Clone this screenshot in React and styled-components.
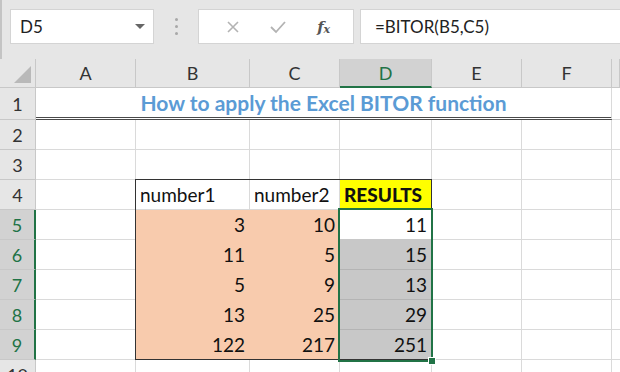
import { Fragment } from "react";
import styled, { createGlobalStyle } from "styled-components";

const GREEN = "#217346";
const GRID = "#dadada";
const HEAD_LINE = "#c8c8c8";
const PEACH = "#f8cbad";
const SHADE = "#c8c8c8";

const Global = createGlobalStyle`
  html, body {
    margin: 0;
    padding: 0;
    background: #ffffff;
    overflow: hidden;
  }
  body {
    font-family: Lato, "Liberation Sans", sans-serif;
  }
`;

const Page = styled.div`
  width: 620px;
  height: 372px;
  overflow: hidden;
  background: #ffffff;
`;

const Toolbar = styled.div`
  height: 59px;
  background: #e6e6e6;
  display: flex;
  align-items: flex-start;
  padding: 9px 0 0 8px;
  box-sizing: border-box;
  border-left: 2px solid #c4c4c4;
`;

const NameBox = styled.div`
  width: 144px;
  height: 35px;
  background: #fff;
  border: 1px solid #d4d4d4;
  box-sizing: border-box;
  display: flex;
  align-items: center;
  justify-content: space-between;
  padding: 0 8px 0 9px;
  font-size: 17px;
  color: #222;
`;

const Caret = styled.span`
  width: 0;
  height: 0;
  border-left: 5px solid transparent;
  border-right: 5px solid transparent;
  border-top: 5px solid #666;
`;

const Dots = styled.div`
  width: 44px;
  height: 35px;
  display: flex;
  flex-direction: column;
  align-items: center;
  justify-content: center;
  gap: 4px;
  span {
    width: 3px;
    height: 3px;
    border-radius: 50%;
    background: #a8a8a8;
  }
`;

const FxBox = styled.div`
  width: 156px;
  height: 35px;
  background: #fff;
  border: 1px solid #d4d4d4;
  box-sizing: border-box;
  display: flex;
  align-items: center;
  justify-content: space-around;
  padding: 0 8px 0 12px;
`;

const Fx = styled.span`
  font-family: "DejaVu Serif", "Liberation Serif", serif;
  font-style: italic;
  font-weight: bold;
  font-size: 15px;
  color: #555;
  sub {
    font-size: 11px;
    vertical-align: -1px;
  }
`;

const Formula = styled.div`
  flex: 1;
  margin-left: 6px;
  height: 35px;
  background: #fff;
  border: 1px solid #d4d4d4;
  border-right: none;
  box-sizing: border-box;
  display: flex;
  align-items: center;
  padding-left: 14px;
  font-size: 17px;
  color: #222;
`;

const Sheet = styled.div`
  display: grid;
  grid-template-columns: 36px 100px 114px 90px 92px 90px 90px 8px;
  grid-template-rows: 29px 32px repeat(9, 30px);
`;

const ColHead = styled.div`
  grid-row: 1;
  background: ${(p) => (p.$sel ? "#d2d2d2" : "#e6e6e6")};
  color: ${(p) => (p.$sel ? GREEN : "#333")};
  border-right: 1px solid ${HEAD_LINE};
  border-bottom: ${(p) => (p.$sel ? `2px solid ${GREEN}` : `1px solid ${HEAD_LINE}`)};
  box-sizing: border-box;
  display: flex;
  align-items: center;
  justify-content: center;
  font-size: 18px;
`;

const Corner = styled(ColHead)`
  align-items: flex-end;
  justify-content: flex-end;
  padding: 0 4px 4px 0;
`;

const RowHead = styled.div`
  grid-column: 1;
  grid-row: ${(p) => p.$r};
  background: ${(p) => (p.$sel ? "#d2d2d2" : "#e6e6e6")};
  color: ${(p) => (p.$sel ? GREEN : "#333")};
  border-right: ${(p) => (p.$sel ? `2px solid ${GREEN}` : `1px solid ${HEAD_LINE}`)};
  border-bottom: 1px solid ${HEAD_LINE};
  box-sizing: border-box;
  display: flex;
  align-items: center;
  justify-content: center;
  font-size: 18px;
`;

const Cell = styled.div`
  grid-column: ${(p) => p.$c};
  grid-row: ${(p) => p.$r};
  background: ${(p) => p.$fill || "#fff"};
  border-right: 1px solid ${(p) => p.$line || GRID};
  border-bottom: 1px solid ${(p) => p.$lineB || p.$line || GRID};
  box-sizing: border-box;
  display: flex;
  align-items: center;
  justify-content: ${(p) => (p.$align === "right" ? "flex-end" : "flex-start")};
  padding: 0 4px;
  font-size: 19px;
  font-weight: ${(p) => (p.$bold ? 900 : 400)};
  color: #111;
  overflow: hidden;
  white-space: nowrap;
`;

const Title = styled.div`
  grid-column: 2 / 8;
  grid-row: 2;
  border-right: 1px solid ${GRID};
  border-bottom: 3px double #4a4a4a;
  box-sizing: border-box;
  display: flex;
  align-items: center;
  justify-content: center;
  font-size: 21px;
  font-weight: bold;
  color: #5b9bd5;
`;

const Frame = styled.div`
  grid-column: 3 / 6;
  grid-row: 5 / 11;
  margin: -1px 0 0 -1px;
  border: 1px solid #333;
  pointer-events: none;
  z-index: 1;
`;

const Selection = styled.div`
  grid-column: 5 / 6;
  grid-row: 6 / 11;
  margin: -2px -1px -2px -2px;
  border: 2px solid ${GREEN};
  pointer-events: none;
  position: relative;
  z-index: 2;
`;

const Handle = styled.span`
  position: absolute;
  right: -5px;
  bottom: -5px;
  width: 6px;
  height: 6px;
  background: ${GREEN};
  border: 1px solid #fff;
`;

const rows = [
  [3, 10, 11],
  [11, 5, 15],
  [5, 9, 13],
  [13, 25, 29],
  [122, 217, 251],
];

const cols = ["A", "B", "C", "D", "E", "F", ""];

// empty cells for a sheet row, for the given grid columns
const blanks = (r, from) =>
  cols.slice(from - 2).map((_, i) => <Cell key={`${r}-${i}`} $r={r} $c={from + i} />);

export default function App() {
  return (
    <Page>
      <Global />
      <Toolbar>
        <NameBox>
          D5
          <Caret />
        </NameBox>
        <Dots>
          <span />
          <span />
          <span />
        </Dots>
        <FxBox>
          <svg width="14" height="14" viewBox="0 0 14 14">
            <path d="M2 2 L12 12 M12 2 L2 12" stroke="#b3b3b3" strokeWidth="1.6" />
          </svg>
          <svg width="18" height="14" viewBox="0 0 18 14">
            <path d="M2 7 L7 12 L16 2" stroke="#b3b3b3" strokeWidth="1.8" fill="none" />
          </svg>
          <Fx>
            f<sub>x</sub>
          </Fx>
        </FxBox>
        <Formula>=BITOR(B5,C5)</Formula>
      </Toolbar>

      <Sheet>
        <Corner style={{ gridColumn: 1 }}>
          <svg width="17" height="17" viewBox="0 0 17 17">
            <path d="M17 0 L17 17 L0 17 Z" fill="#b9b9b9" />
          </svg>
        </Corner>
        {cols.map((c) => (
          <ColHead key={c || "g"} $sel={c === "D"}>
            {c}
          </ColHead>
        ))}

        <RowHead $r={2}>1</RowHead>
        <Title>How to apply the Excel BITOR function</Title>
        <Cell $r={2} $c={8} />

        {[2, 3].map((n) => (
          <Fragment key={n}>
            <RowHead $r={n + 1}>{n}</RowHead>
            {blanks(n + 1, 2)}
          </Fragment>
        ))}

        <RowHead $r={5}>4</RowHead>
        <Cell $r={5} $c={2} />
        <Cell $r={5} $c={3}>number1</Cell>
        <Cell $r={5} $c={4}>number2</Cell>
        <Cell $r={5} $c={5} $fill="#ffff00" $bold>
          RESULTS
        </Cell>
        {blanks(5, 6)}

        {rows.map(([a, b, res], i) => {
          const r = i + 6;
          const active = i === 0;
          return (
            <Fragment key={r}>
              <RowHead $r={r} $sel>
                {i + 5}
              </RowHead>
              <Cell $r={r} $c={2} />
              <Cell $r={r} $c={3} $fill={PEACH} $line={PEACH} $align="right">
                {a}
              </Cell>
              <Cell $r={r} $c={4} $fill={PEACH} $lineB={PEACH} $align="right">
                {b}
              </Cell>
              <Cell
                $r={r}
                $c={5}
                $fill={active ? "#fff" : SHADE}
                $lineB={active ? SHADE : "#b4b4b4"}
                $align="right"
              >
                {res}
              </Cell>
              {blanks(r, 6)}
            </Fragment>
          );
        })}

        <RowHead $r={11}>10</RowHead>
        {blanks(11, 2)}

        <Frame />
        <Selection>
          <Handle />
        </Selection>
      </Sheet>
    </Page>
  );
}
